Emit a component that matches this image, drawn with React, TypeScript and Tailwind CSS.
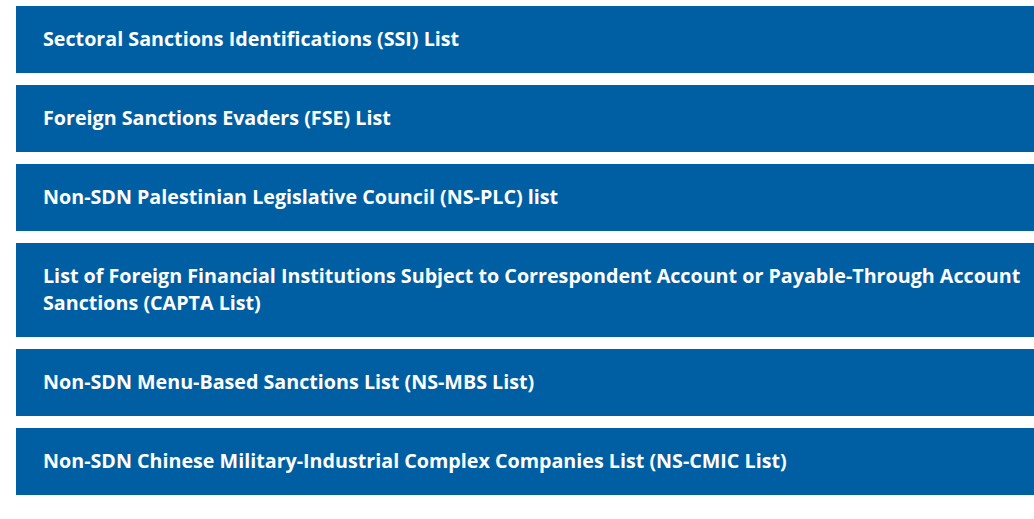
import React from 'react';

const lists = [
  'Sectoral Sanctions Identifications (SSI) List',
  'Foreign Sanctions Evaders (FSE) List',
  'Non-SDN Palestinian Legislative Council (NS-PLC) list',
  'List of Foreign Financial Institutions Subject to Correspondent Account or Payable-Through Account Sanctions (CAPTA List)',
  'Non-SDN Menu-Based Sanctions List (NS-MBS List)',
  'Non-SDN Chinese Military-Industrial Complex Companies List (NS-CMIC List)',
];

const App = () => {
  return (
    <div className="w-[1034px] h-[519px] overflow-hidden bg-white">
      <div className="flex flex-col gap-[12px] pt-[6px] pl-4">
        {lists.map((title) => (
          <a
            key={title}
            href="#"
            className="block w-[1060px] bg-[#005ea2] pl-[27px] py-[20.25px] text-white font-bold text-[19.7px] leading-[26.5px] font-['Open_Sans','Noto_Sans',sans-serif]"
          >
            <span className="block max-w-[990px]">{title}</span>
          </a>
        ))}
      </div>
    </div>
  );
};

export default App;
